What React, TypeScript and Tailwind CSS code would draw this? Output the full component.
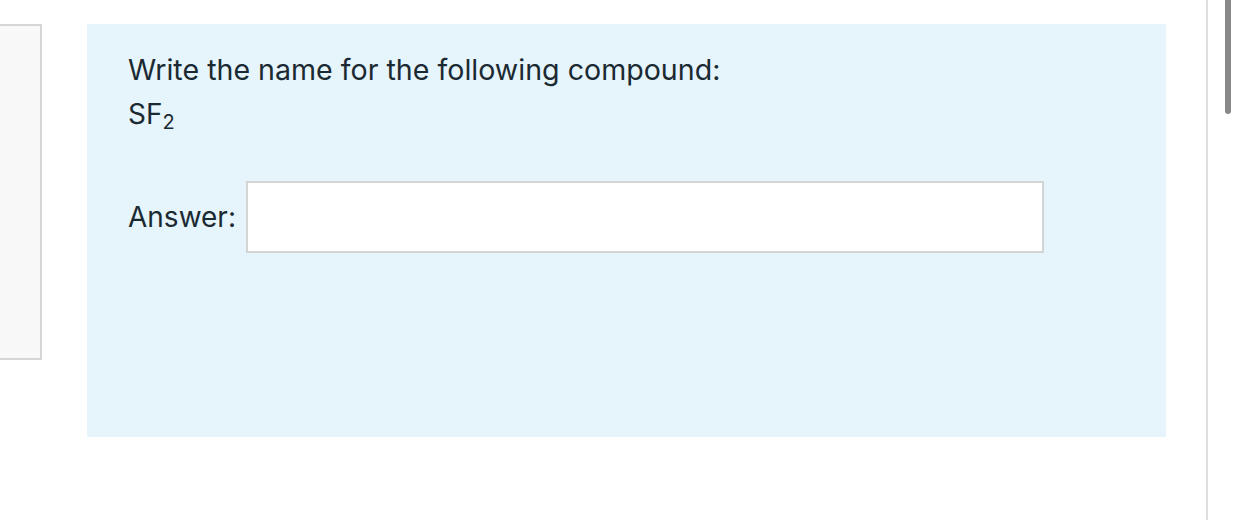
export default function App() {
  return (
    <div className="relative flex h-[520px] w-[1238px] overflow-hidden bg-white font-['Inter',sans-serif] text-[#1b2a32]">
      {/* collapsed side panel on the left */}
      <div className="mt-[24px] h-[336px] w-[42px] shrink-0 border-2 border-l-0 border-[#d6d6d6] bg-[#f8f8f8]" />

      {/* question card */}
      <div className="ml-[45px] mt-[24px] h-[413px] w-[1079px] shrink-0 bg-[#e6f4fc] pl-[41px] pt-[23px]">
        <p className="text-[28.6px] leading-[45px]">Write the name for the following compound:</p>
        <p className="text-[28px] leading-[45px]">
          SF<sub className="text-[20px]">2</sub>
        </p>
        <div className="mt-[44px] flex items-center gap-[10px]">
          <label className="text-[28px]">Answer:</label>
          <input
            type="text"
            className="h-[72px] w-[798px] border-2 border-[#d4d4d4] bg-white px-3 text-[26px] outline-none"
          />
        </div>
      </div>

      {/* page edge and scrollbar */}
      <div className="ml-[40px] h-full w-[2px] shrink-0 bg-[#dedede]" />
      <div className="ml-[17px] mt-0 h-[114px] w-[6px] shrink-0 rounded-b-full bg-[#888888]" />
    </div>
  );
}
